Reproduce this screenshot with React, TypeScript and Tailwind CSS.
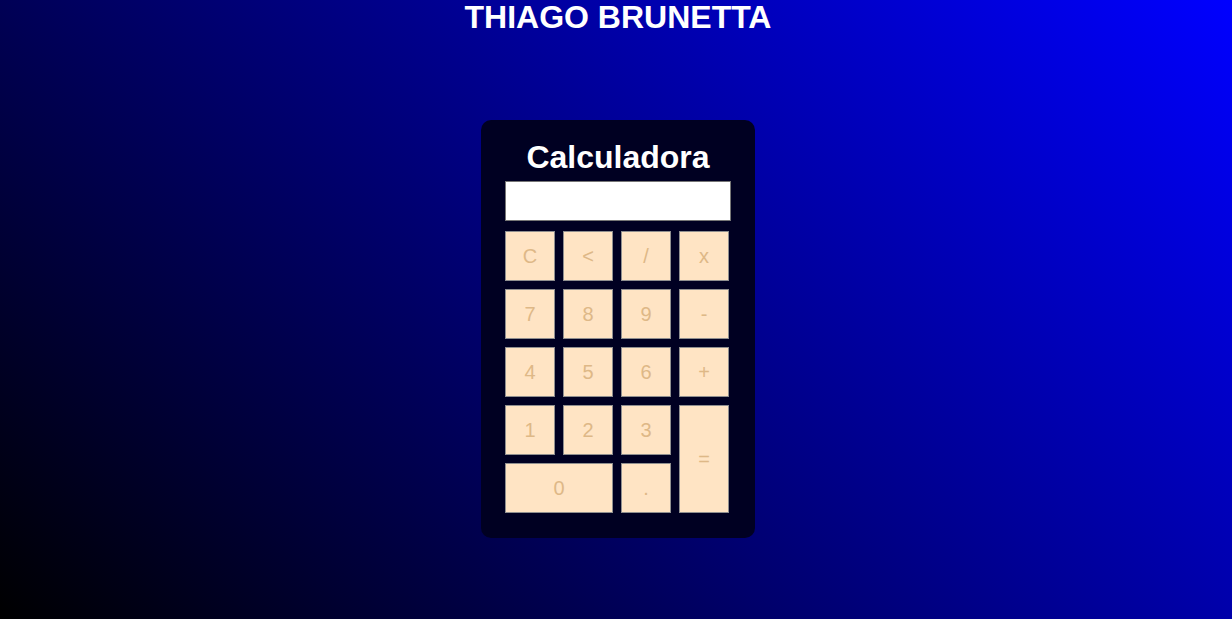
import React from "react";

const btn =
  "flex items-center justify-center bg-[#ffe4c4] text-[#deb887] text-[20px] border border-[#8f8f8f] leading-none";

export default function App() {
  const cells: { label: string; cls?: string }[] = [
    { label: "C" },
    { label: "<" },
    { label: "/" },
    { label: "x" },
    { label: "7" },
    { label: "8" },
    { label: "9" },
    { label: "-" },
    { label: "4" },
    { label: "5" },
    { label: "6" },
    { label: "+" },
    { label: "1" },
    { label: "2" },
    { label: "3" },
    { label: "=", cls: "row-span-2" },
    { label: "0", cls: "col-span-2" },
    { label: "." },
  ];
  return (
    <div
      className="min-h-screen w-full bg-[linear-gradient(45deg,#000000,#0000ff)] flex flex-col items-center pl-[4px]"
      style={{ fontFamily: '"Liberation Sans", Arial, sans-serif' }}
    >
      <h1 className="m-0 text-[32px] font-bold leading-[34px] text-white">THIAGO BRUNETTA</h1>
      <div className="mt-[86px] w-[274px] rounded-[10px] bg-[#000022] px-6 pt-5 pb-[25px] flex flex-col">
        <h2 className="m-0 text-center text-[32px] font-bold leading-[34px] text-white mb-[7px]">Calculadora</h2>
        <input
          type="text"
          readOnly
          className="h-[40px] w-[226px] bg-white border border-[#767676] outline-none"
        />
        <div className="mt-[10px] grid grid-cols-[repeat(4,50px)] grid-rows-[repeat(5,50px)] gap-[8px]">
          {cells.map((c) => (
            <button key={c.label} className={`${btn} ${c.cls ?? ""}`}>
              {c.label}
            </button>
          ))}
        </div>
      </div>
    </div>
  );
}
